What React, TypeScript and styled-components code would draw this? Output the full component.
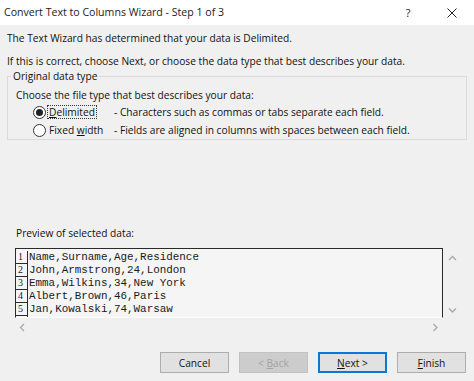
import React from 'react';
import styled, { createGlobalStyle } from 'styled-components';

const GlobalStyle = createGlobalStyle`
  html, body {
    margin: 0;
    padding: 0;
    background: #f0f0f0;
  }
  body {
    font-family: "Open Sans", "Noto Sans", "Liberation Sans", sans-serif;
    font-size: 10.2px;
    color: #111;
  }
`;

const Window = styled.div`
  width: 474px;
  height: 381px;
  display: flex;
  flex-direction: column;
  background: #f0f0f0;
  overflow: hidden;
`;

const TitleBar = styled.div`
  height: 25px;
  flex: none;
  background: #ffffff;
  display: flex;
  align-items: center;
  padding-left: 4px;
`;

const Title = styled.div`
  flex: 1;
  font-size: 10.6px;
  color: #222;
  padding-bottom: 1px;
`;

const TitleButton = styled.div`
  width: 44px;
  height: 25px;
  display: flex;
  align-items: center;
  justify-content: center;
  font-size: 11px;
  color: #222;
`;

const Body = styled.div`
  flex: 1;
  padding: 2px 7px 0 7px;
  display: flex;
  flex-direction: column;
`;

const Intro = styled.div`
  line-height: 23px;
`;

const Group = styled.fieldset`
  margin: -4px 0 0 0;
  padding: 0 0 0 3px;
  border: 1px solid #dadada;
  min-width: 0;
`;

const Legend = styled.legend`
  padding: 0 2px;
  line-height: 14px;
`;

const GroupContent = styled.div`
  padding: 4px 0 0 5px;
`;

const Line = styled.div`
  line-height: 16px;
`;

const RadioRow = styled.div`
  display: flex;
  align-items: center;
  height: 18px;
  padding-left: 17px;
`;

const RadioCircle = styled.span<{ $checked?: boolean }>`
  width: 11px;
  height: 11px;
  flex: none;
  border: 1px solid #333;
  border-radius: 50%;
  background: #fff;
  display: flex;
  align-items: center;
  justify-content: center;
  &::after {
    content: '';
    width: 7px;
    height: 7px;
    border-radius: 50%;
    background: ${p => (p.$checked ? '#222' : 'transparent')};
  }
`;

const RadioLabelCell = styled.span`
  width: 67px;
  flex: none;
  padding-left: 1px;
`;

const RadioLabel = styled.span<{ $focused?: boolean }>`
  display: inline-block;
  padding: 0 1px;
  line-height: 12px;
  border: 1px dotted ${p => (p.$focused ? '#333' : 'transparent')};
`;

const Hint = styled.span`
  white-space: nowrap;
`;

const Key = styled.span`
  text-decoration: underline;
`;

const PreviewLabel = styled.div`
  line-height: 16px;
  margin-top: 85px;
  padding-left: 9px;
`;

const Preview = styled.div`
  margin: 7px 0 0 8px;
  width: 447px;
  display: grid;
  grid-template-columns: 428px 19px;
  grid-template-rows: 70px 17px;
`;

const PreviewText = styled.div`
  border: 1px solid #2a2a2a;
  border-bottom: 1px solid #fbfbfb;
  background: #f5f5f5;
  padding-top: 2px;
  overflow: hidden;
`;

const DataRow = styled.div`
  display: flex;
  height: 13px;
`;

const RowNumber = styled.span`
  width: 12px;
  flex: none;
  box-sizing: border-box;
  border-right: 1px solid #2a2a2a;
  border-bottom: 1px solid #2a2a2a;
  font-family: "Liberation Serif", serif;
  font-size: 10px;
  line-height: 12px;
  padding-left: 2px;
  color: #222;
`;

const RowData = styled.span`
  font-family: "Liberation Mono", monospace;
  font-size: 10.9px;
  line-height: 13px;
  color: #1a1a1a;
  white-space: pre;
  padding-left: 1px;
`;

const VScroll = styled.div`
  display: flex;
  flex-direction: column;
  justify-content: space-between;
  align-items: center;
  padding: 7px 0 4px 0;
`;

const HScroll = styled.div`
  display: flex;
  justify-content: space-between;
  align-items: center;
  padding: 2px 4px 0 4px;
`;

const Arrow = styled.svg`
  display: block;
`;

const ButtonRow = styled.div`
  display: flex;
  justify-content: flex-end;
  gap: 10px;
  margin-top: 17px;
  padding-right: 1px;
`;

const Button = styled.button<{ $variant?: 'default' | 'disabled' | 'primary' }>`
  width: 69px;
  height: 21px;
  box-sizing: border-box;
  font-family: inherit;
  font-size: 10.2px;
  padding: 0;
  margin: 0;
  color: ${p => (p.$variant === 'disabled' ? '#a3a3a3' : '#111')};
  background: ${p => (p.$variant === 'disabled' ? '#cccccc' : '#e1e1e1')};
  border: ${p =>
    p.$variant === 'primary'
      ? '2px solid #0a78d4'
      : p.$variant === 'disabled'
      ? '1px solid #c2c2c2'
      : '1px solid #adadad'};
`;

const Chevron = ({ dir }: { dir: 'up' | 'down' | 'left' | 'right' }) => {
  const paths: Record<string, string> = {
    up: 'M1 5 L4.5 1.5 L8 5',
    down: 'M1 1.5 L4.5 5 L8 1.5',
    left: 'M5 1 L1.5 4.5 L5 8',
    right: 'M1.5 1 L5 4.5 L1.5 8',
  };
  const horiz = dir === 'left' || dir === 'right';
  return (
    <Arrow width={horiz ? 7 : 9} height={horiz ? 9 : 7} viewBox={horiz ? '0 0 7 9' : '0 0 9 7'}>
      <path d={paths[dir]} fill="none" stroke="#a8a8a8" strokeWidth="1.3" />
    </Arrow>
  );
};

const rows = [
  'Name,Surname,Age,Residence',
  'John,Armstrong,24,London',
  'Emma,Wilkins,34,New York',
  'Albert,Brown,46,Paris',
  'Jan,Kowalski,74,Warsaw',
];

export default function App() {
  return (
    <Window>
      <GlobalStyle />
      <TitleBar>
        <Title>Convert Text to Columns Wizard - Step 1 of 3</Title>
        <TitleButton>?</TitleButton>
        <TitleButton>
          <svg width="10" height="10" viewBox="0 0 10 10">
            <path d="M0.5 0.5 L9.5 9.5 M9.5 0.5 L0.5 9.5" stroke="#222" strokeWidth="1" />
          </svg>
        </TitleButton>
      </TitleBar>
      <Body>
        <Intro>
          <div>The Text Wizard has determined that your data is Delimited.</div>
          <div>If this is correct, choose Next, or choose the data type that best describes your data.</div>
        </Intro>
        <Group>
          <Legend>Original data type</Legend>
          <GroupContent>
            <Line>Choose the file type that best describes your data:</Line>
            <RadioRow>
              <RadioCircle $checked />
              <RadioLabelCell>
                <RadioLabel $focused>
                  <Key>D</Key>elimited
                </RadioLabel>
              </RadioLabelCell>
              <Hint>- Characters such as commas or tabs separate each field.</Hint>
            </RadioRow>
            <RadioRow>
              <RadioCircle />
              <RadioLabelCell>
                <RadioLabel>
                  Fixed <Key>w</Key>idth
                </RadioLabel>
              </RadioLabelCell>
              <Hint>- Fields are aligned in columns with spaces between each field.</Hint>
            </RadioRow>
          </GroupContent>
        </Group>
        <PreviewLabel>Preview of selected data:</PreviewLabel>
        <Preview>
          <PreviewText>
            {rows.map((r, i) => (
              <DataRow key={i}>
                <RowNumber>{i + 1}</RowNumber>
                <RowData>{r}</RowData>
              </DataRow>
            ))}
            <DataRow>
              <RowNumber />
            </DataRow>
          </PreviewText>
          <VScroll>
            <Chevron dir="up" />
            <Chevron dir="down" />
          </VScroll>
          <HScroll>
            <Chevron dir="left" />
            <Chevron dir="right" />
          </HScroll>
          <div />
        </Preview>
        <ButtonRow>
          <Button>Cancel</Button>
          <Button $variant="disabled" disabled>
            &lt; <Key>B</Key>ack
          </Button>
          <Button $variant="primary">
            <Key>N</Key>ext &gt;
          </Button>
          <Button>
            <Key>F</Key>inish
          </Button>
        </ButtonRow>
      </Body>
    </Window>
  );
}
